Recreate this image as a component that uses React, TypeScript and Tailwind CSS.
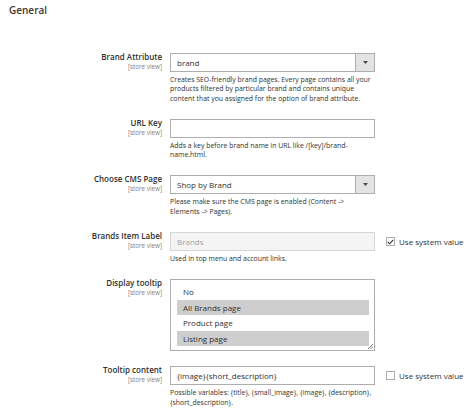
import React from "react";

function Label({ title }: { title: string }) {
  return (
    <div className="w-[162px] shrink-0 text-right mt-[-1px]">
      <div className="text-[8px] leading-[10px] font-semibold text-[#303030]">{title}</div>
      <div className="text-[6.3px] leading-[9px] text-[#808080]">[store view]</div>
    </div>
  );
}

function Note({ children }: { children: React.ReactNode }) {
  return <div className="mt-[3px] text-[6.9px] leading-[9.3px] text-[#303030]">{children}</div>;
}

function Select({ value }: { value: string }) {
  return (
    <div className="h-[19px] border border-[#adadad] bg-white flex items-stretch">
      <div className="flex-1 flex items-center pl-[6px] text-[8px] text-[#303030]">{value}</div>
      <div className="w-[19px] bg-[#e3e3e3] border-l border-[#adadad] flex items-center justify-center">
        <svg width="5" height="3" viewBox="0 0 5 3">
          <path d="M0 0 L5 0 L2.5 3 Z" fill="#514943" />
        </svg>
      </div>
    </div>
  );
}

function Input({ value, disabled }: { value?: string; disabled?: boolean }) {
  return (
    <div
      className={
        disabled
          ? "h-[19px] border border-[#d6d6d6] bg-[#f4f4f4] flex items-center pl-[6px] text-[8px] text-[#a3a3a3]"
          : "h-[19px] border border-[#adadad] bg-white flex items-center pl-[6px] text-[8px] text-[#303030]"
      }
    >
      {value}
    </div>
  );
}

function SystemValue({ checked }: { checked: boolean }) {
  return (
    <div className="ml-[11px] h-[19px] flex items-center gap-[4px] shrink-0">
      <div className="w-[9px] h-[9px] border border-[#adadad] bg-white flex items-center justify-center">
        {checked && (
          <svg width="7" height="6" viewBox="0 0 7 6">
            <path d="M0.8 3 L2.7 4.8 L6.2 0.8" fill="none" stroke="#303030" strokeWidth="1.1" />
          </svg>
        )}
      </div>
      <span className="text-[8px] text-[#303030] whitespace-nowrap">Use system value</span>
    </div>
  );
}

export default function App() {
  const options = [
    { t: "No", sel: false },
    { t: "All Brands page", sel: true },
    { t: "Product page", sel: false },
    { t: "Listing page", sel: true },
  ];
  return (
    <div className="w-[474px] h-[408px] bg-white overflow-hidden font-['Open_Sans',sans-serif]">
      <div className="pl-[9px] pt-[3px] text-[10px] leading-[14px] font-semibold text-[#41362f]">General</div>
      <div className="mt-[36px] flex flex-col gap-[16px]">
        <div className="flex">
          <Label title="Brand Attribute" />
          <div className="ml-[8px] w-[205px]">
            <Select value="brand" />
            <Note>
              Creates SEO-friendly brand pages. Every page contains all your products filtered by particular brand and
              contains unique content that you assigned for the option of brand attribute.
            </Note>
          </div>
        </div>
        <div className="flex">
          <Label title="URL Key" />
          <div className="ml-[8px] w-[205px]">
            <Input />
            <Note>Adds a key before brand name in URL like /[key]/brand-name.html.</Note>
          </div>
        </div>
        <div className="flex">
          <Label title="Choose CMS Page" />
          <div className="ml-[8px] w-[205px]">
            <Select value="Shop by Brand" />
            <Note>Please make sure the CMS page is enabled (Content -&gt; Elements -&gt; Pages).</Note>
          </div>
        </div>
        <div className="flex">
          <Label title="Brands Item Label" />
          <div className="ml-[8px] w-[205px]">
            <Input value="Brands" disabled />
            <Note>Used in top menu and account links.</Note>
          </div>
          <SystemValue checked />
        </div>
        <div className="flex">
          <Label title="Display tooltip" />
          <div className="ml-[8px] w-[205px]">
            <div className="relative h-[72px] border border-[#adadad] bg-white pt-[4px] pl-[6px] pr-[5px]">
              {options.map((o) => (
                <div
                  key={o.t}
                  className={
                    o.sel
                      ? "h-[15.5px] flex items-center pl-[6px] text-[8px] text-[#303030] bg-[#cecece]"
                      : "h-[15.5px] flex items-center pl-[6px] text-[8px] text-[#303030]"
                  }
                >
                  {o.t}
                </div>
              ))}
              <svg className="absolute right-[1px] bottom-[1px]" width="6" height="6" viewBox="0 0 6 6">
                <path d="M1 6 L6 1 M3.5 6 L6 3.5" stroke="#555" strokeWidth="0.8" />
              </svg>
            </div>
          </div>
        </div>
        <div className="flex -mt-[1px]">
          <Label title="Tooltip content" />
          <div className="ml-[8px] w-[205px]">
            <Input value="{image}{short_description}" />
            <Note>
              Possible variables: {"{title}"}, {"{small_image}"}, {"{image}"}, {"{description}"},{" "}
              {"{short_description}"}.
            </Note>
          </div>
          <SystemValue checked={false} />
        </div>
      </div>
    </div>
  );
}
